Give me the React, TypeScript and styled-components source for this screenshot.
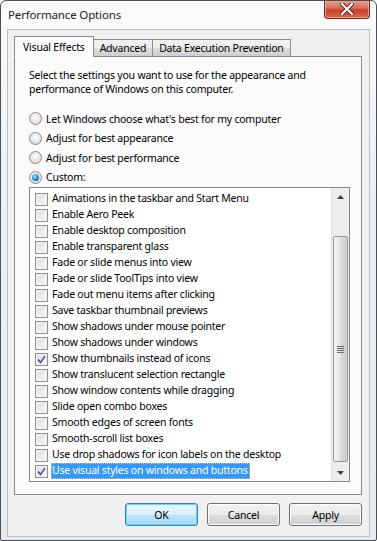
import React from "react";
import styled, { createGlobalStyle } from "styled-components";

const GlobalStyle = createGlobalStyle`
  html, body {
    margin: 0;
    padding: 0;
    background: #ffffff;
  }
  body {
    font-family: "Noto Sans", "DejaVu Sans", sans-serif;
    font-size: 10.5px;
    letter-spacing: -0.22px;
    color: #000;
  }
`;

const Window = styled.div`
  width: 377px;
  height: 541px;
  box-sizing: border-box;
  border: 1px solid #4c4f55;
  border-radius: 6px 6px 2px 2px;
  background: linear-gradient(180deg, #fbfcfd 0%, #eef1f4 30%, #e7eaee 100%);
  display: flex;
  flex-direction: column;
  overflow: hidden;
`;

const TitleBar = styled.div`
  height: 28px;
  display: flex;
  align-items: flex-start;
  justify-content: space-between;
  padding-left: 7px;
`;

const Title = styled.span`
  margin-top: 6px;
  font-size: 11.5px;
  letter-spacing: -0.15px;
  color: #1e1e1e;
`;

const CloseButton = styled.div`
  width: 46px;
  height: 19px;
  margin-right: 6px;
  margin-top: -1px;
  box-sizing: border-box;
  border: 1px solid #7a2a22;
  border-top: none;
  border-radius: 0 0 4px 4px;
  background: linear-gradient(180deg, #e8a493 0%, #d3715b 45%, #c7412a 55%, #d96a4c 100%);
  box-shadow: inset 0 0 0 1px rgba(255, 210, 200, 0.5);
  display: flex;
  align-items: center;
  justify-content: center;
`;

const Client = styled.div`
  flex: 1;
  margin: 0 6px 3px 6px;
  border: 1px solid #b9c0c9;
  background: #f0f0f0;
  display: flex;
  flex-direction: column;
  padding: 7px 8px 0 6px;
`;

const TabStrip = styled.div`
  display: flex;
  align-items: flex-end;
  height: 20px;
  position: relative;
  z-index: 1;
  margin-bottom: -1px;
`;

const Tab = styled.div<{ $active?: boolean }>`
  box-sizing: border-box;
  height: ${(p) => (p.$active ? "21px" : "18px")};
  padding: 0 ${(p) => (p.$active ? "8px" : "6px")};
  margin-left: ${(p) => (p.$active ? "0" : "-1px")};
  border: 1px solid #898c95;
  border-bottom: ${(p) => (p.$active ? "1px solid #fbfbfb" : "1px solid #898c95")};
  background: ${(p) =>
    p.$active ? "#fbfbfb" : "linear-gradient(180deg, #f2f2f2 0%, #ebebeb 50%, #dddddd 51%, #cfcfcf 100%)"};
  display: flex;
  align-items: center;
  color: #000;
  white-space: nowrap;
  &:first-child {
    margin-left: 0;
  }
`;

const Panel = styled.div`
  box-sizing: border-box;
  width: 348px;
  height: 439px;
  border: 1px solid #898c95;
  background: #fbfbfb;
  padding: 11px 0 0 14px;
  display: flex;
  flex-direction: column;
`;

const Intro = styled.p`
  margin: 0;
  line-height: 14px;
  width: 300px;
`;

const RadioGroup = styled.div`
  display: flex;
  flex-direction: column;
  margin-top: 14px;
  gap: 2px;
`;

const RadioRow = styled.label`
  display: flex;
  align-items: center;
  height: 17.5px;
  gap: 4px;
`;

const RadioDot = styled.span<{ $on?: boolean }>`
  width: 13px;
  height: 13px;
  box-sizing: border-box;
  border-radius: 50%;
  border: 1px solid #8a8a8a;
  background: radial-gradient(circle at 50% 40%, #ffffff 0%, #e6e6e6 55%, #cfcfcf 100%);
  display: flex;
  align-items: center;
  justify-content: center;
  &::after {
    content: "";
    display: ${(p) => (p.$on ? "block" : "none")};
    width: 7px;
    height: 7px;
    border-radius: 50%;
    background: radial-gradient(circle at 40% 35%, #9fe6ff 0%, #2a9ad6 45%, #0b3f6a 100%);
  }
`;

const ListBox = styled.div`
  box-sizing: border-box;
  width: 321px;
  height: 295px;
  margin-top: 1px;
  border: 1px solid #828790;
  background: #ffffff;
  display: flex;
`;

const Items = styled.div`
  flex: 1;
  padding: 3px 0 0 5px;
  display: flex;
  flex-direction: column;
`;

const ItemRow = styled.div`
  height: 16px;
  display: flex;
  align-items: center;
  gap: 3px;
`;

const CheckBox = styled.span`
  width: 13px;
  height: 13px;
  box-sizing: border-box;
  border: 1px solid #8e8f8f;
  background: linear-gradient(135deg, #dcdcdc 0%, #f0f0f0 60%, #fbfbfb 100%);
  box-shadow: inset 0 0 0 1px #f4f4f4;
  display: flex;
  align-items: center;
  justify-content: center;
  flex-shrink: 0;
`;

const ItemText = styled.span<{ $selected?: boolean }>`
  height: 16px;
  line-height: 15px;
  padding: 0 2px 0 1px;
  box-sizing: border-box;
  white-space: nowrap;
  color: ${(p) => (p.$selected ? "#ffffff" : "#000000")};
  background: ${(p) => (p.$selected ? "#3399ff" : "transparent")};
  outline: ${(p) => (p.$selected ? "1px dotted #f5b85b" : "none")};
  outline-offset: -1px;
`;

const ScrollBar = styled.div`
  width: 17px;
  background: #ededed;
  border-left: 1px solid #e2e2e2;
  display: flex;
  flex-direction: column;
  align-items: stretch;
`;

const ArrowBox = styled.div`
  height: 17px;
  display: flex;
  align-items: center;
  justify-content: center;
`;

const Track = styled.div`
  flex: 1;
  display: flex;
  flex-direction: column;
  padding-top: 31px;
  padding-bottom: 2px;
`;

const Thumb = styled.div`
  flex: 1;
  margin: 0 1px;
  box-sizing: border-box;
  border: 1px solid #979797;
  border-radius: 2px;
  background: linear-gradient(90deg, #f4f4f4 0%, #e8e8e8 45%, #d6d6d6 55%, #cfcfcf 100%);
  display: flex;
  align-items: center;
  justify-content: center;
`;

const Grip = styled.div`
  width: 7px;
  height: 7px;
  background: repeating-linear-gradient(180deg, #6e6e6e 0 1px, transparent 1px 2px);
`;

const ButtonRow = styled.div`
  display: flex;
  justify-content: flex-end;
  gap: 9px;
  width: 348px;
  margin-top: 8px;
`;

const Button = styled.button<{ $default?: boolean }>`
  width: 73px;
  height: 23px;
  box-sizing: border-box;
  border-radius: 3px;
  border: 1px solid ${(p) => (p.$default ? "#3c7fb1" : "#707070")};
  background: ${(p) =>
    p.$default
      ? "linear-gradient(180deg, #eaf6fd 0%, #d9f0fc 50%, #bee6fd 51%, #a7d9f5 100%)"
      : "linear-gradient(180deg, #f2f2f2 0%, #ebebeb 50%, #dddddd 51%, #cfcfcf 100%)"};
  box-shadow: inset 0 0 0 1px ${(p) => (p.$default ? "#5ddcf8" : "#fcfcfc")};
  font-family: "Noto Sans", "DejaVu Sans", sans-serif;
  font-size: 10.5px;
  letter-spacing: -0.22px;
  color: #000;
  padding: 0;
`;

const CheckMark = () => (
  <svg width="9" height="9" viewBox="0 0 9 9">
    <path d="M1 4.5 L3.5 7.5 L8 1" fill="none" stroke="#3b4f9a" strokeWidth="1.5" />
  </svg>
);

const items: [string, boolean][] = [
  ["Animations in the taskbar and Start Menu", false],
  ["Enable Aero Peek", false],
  ["Enable desktop composition", false],
  ["Enable transparent glass", false],
  ["Fade or slide menus into view", false],
  ["Fade or slide ToolTips into view", false],
  ["Fade out menu items after clicking", false],
  ["Save taskbar thumbnail previews", false],
  ["Show shadows under mouse pointer", false],
  ["Show shadows under windows", false],
  ["Show thumbnails instead of icons", true],
  ["Show translucent selection rectangle", false],
  ["Show window contents while dragging", false],
  ["Slide open combo boxes", false],
  ["Smooth edges of screen fonts", false],
  ["Smooth-scroll list boxes", false],
  ["Use drop shadows for icon labels on the desktop", false],
  ["Use visual styles on windows and buttons", true],
];

const radios = [
  "Let Windows choose what's best for my computer",
  "Adjust for best appearance",
  "Adjust for best performance",
  "Custom:",
];

export default function App() {
  return (
    <>
      <GlobalStyle />
      <Window>
        <TitleBar>
          <Title>Performance Options</Title>
          <CloseButton>
            <svg width="14" height="12" viewBox="0 0 14 12">
              <path
                d="M2 1 L12 11 M12 1 L2 11"
                stroke="#4a1a14"
                strokeWidth="4"
                strokeLinecap="square"
              />
              <path
                d="M2 1 L12 11 M12 1 L2 11"
                stroke="#ffffff"
                strokeWidth="2.2"
                strokeLinecap="square"
              />
            </svg>
          </CloseButton>
        </TitleBar>
        <Client>
          <TabStrip>
            <Tab $active>Visual Effects</Tab>
            <Tab>Advanced</Tab>
            <Tab>Data Execution Prevention</Tab>
          </TabStrip>
          <Panel>
            <Intro>
              Select the settings you want to use for the appearance and performance of Windows on
              this computer.
            </Intro>
            <RadioGroup>
              {radios.map((r, i) => (
                <RadioRow key={r}>
                  <RadioDot $on={i === 3} />
                  {r}
                </RadioRow>
              ))}
            </RadioGroup>
            <ListBox>
              <Items>
                {items.map(([label, checked], i) => (
                  <ItemRow key={label}>
                    <CheckBox>{checked && <CheckMark />}</CheckBox>
                    <ItemText $selected={i === items.length - 1}>{label}</ItemText>
                  </ItemRow>
                ))}
              </Items>
              <ScrollBar>
                <ArrowBox>
                  <svg width="7" height="4" viewBox="0 0 7 4">
                    <path d="M0 4 L3.5 0 L7 4 Z" fill="#404040" />
                  </svg>
                </ArrowBox>
                <Track>
                  <Thumb>
                    <Grip />
                  </Thumb>
                </Track>
                <ArrowBox>
                  <svg width="7" height="4" viewBox="0 0 7 4">
                    <path d="M0 0 L3.5 4 L7 0 Z" fill="#404040" />
                  </svg>
                </ArrowBox>
              </ScrollBar>
            </ListBox>
          </Panel>
          <ButtonRow>
            <Button $default>OK</Button>
            <Button>Cancel</Button>
            <Button>Apply</Button>
          </ButtonRow>
        </Client>
      </Window>
    </>
  );
}
